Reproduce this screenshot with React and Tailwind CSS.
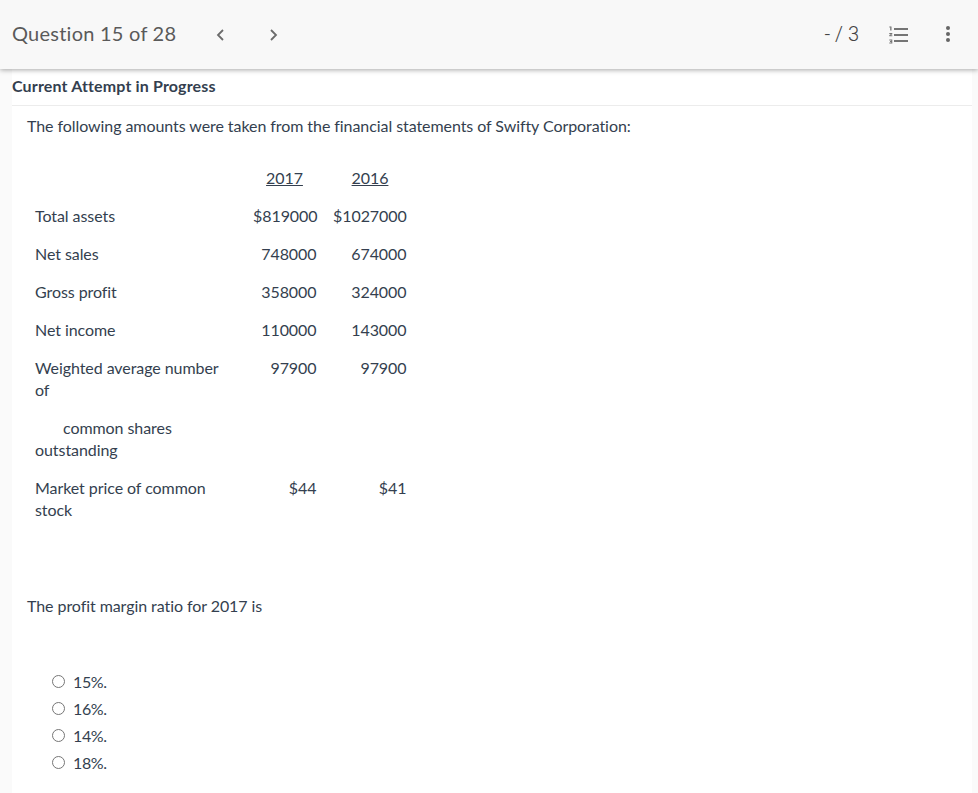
const rows = [
  [<>Total assets</>, "$819000", "$1027000"],
  [<>Net sales</>, "748000", "674000"],
  [<>Gross profit</>, "358000", "324000"],
  [<>Net income</>, "110000", "143000"],
  [<>Weighted average number of</>, "97900", "97900"],
  [<><span className="pl-7">common shares</span> outstanding</>, "", ""],
  [<>Market price of common stock</>, "$44", "$41"],
];

function Radio({ label }) {
  return (
    <div className="flex h-[27px] items-center">
      <span className="ml-[40px] h-[13px] w-[13px] rounded-full border border-[#767676] bg-white" />
      <span className="ml-[8px] tracking-[-0.4px]">{label}</span>
    </div>
  );
}

function ListIcon() {
  return (
    <svg width="20" height="18" viewBox="0 0 20 18" className="block text-[#757575]" fill="currentColor">
      <rect x="5" y="2" width="14" height="2" />
      <rect x="5" y="8" width="14" height="2" />
      <rect x="5" y="14" width="14" height="2" />
      <rect x="1.2" y="0.5" width="1.300" height="4" />
      <rect x="0.3" y="0.5" width="1.200" height="1" />
      <path d="M0.3 7h3v1.300l-1.800 1h1.800v.9h-3v-1.300l1.800-1h-1.800z" />
      <path d="M0.3 13.500h3v4h-3v-.9h2v-.7h-1.300v-.8h1.300v-.7h-2z" />
    </svg>
  );
}

export default function App() {
  return (
    <div className="h-[793px] overflow-hidden bg-[#fafafa] font-['Lato',sans-serif] text-base leading-[22px] tracking-[-0.07px] text-[#343f4f]">
      <header className="relative z-10 flex h-[69px] items-center bg-[#f8f8f8] pl-3 pr-[28px] tracking-normal shadow-[0_1px_5px_rgba(0,0,0,0.35)]">
        <span className="mb-1 text-xl tracking-[0.24px] text-[#5a5a5a]">Question 15 of 28</span>
        <svg width="8" height="14" viewBox="0 0 8 14" className="ml-[40px] text-[#6b6b6b]" fill="none" stroke="currentColor" strokeWidth="1.800">
          <path d="M7 2 2 7l5 5" />
        </svg>
        <svg width="8" height="14" viewBox="0 0 8 14" className="ml-[46px] text-[#6b6b6b]" fill="none" stroke="currentColor" strokeWidth="1.800">
          <path d="M1 2l5 5-5 5" />
        </svg>
        <span className="mb-[2px] ml-auto font-['Roboto',sans-serif] text-xl font-light text-[#444]">- / 3</span>
        <span className="ml-[30px]"><ListIcon /></span>
        <span className="mb-[1px] ml-[37px] flex flex-col gap-[2px]">
          <i className="block h-1 w-1 rounded-full bg-[#666]" />
          <i className="block h-1 w-1 rounded-full bg-[#666]" />
          <i className="block h-1 w-1 rounded-full bg-[#666]" />
        </span>
      </header>
      <main className="mx-[12px] mr-[6px] h-full bg-white">
        <div className="flex h-[37px] items-center border-b border-[#ececec] pb-[3px] font-bold tracking-[0.15px]">Current Attempt in Progress</div>
        <div className="pl-[15px]">
          <p className="mt-[9px]">The following amounts were taken from the financial statements of Swifty Corporation:</p>
          <table className="mt-[22px] w-[388px] table-fixed border-collapse">
            <colgroup>
              <col className="w-[218px]" />
              <col className="w-[80px]" />
              <col className="w-[90px]" />
            </colgroup>
            <thead>
              <tr>
                <th className="p-2 font-normal"></th>
                <th className="p-2 pr-[9px] text-center font-normal underline">2017</th>
                <th className="p-2 text-center font-normal underline">2016</th>
              </tr>
            </thead>
            <tbody>
              {rows.map((r, i) => (
                <tr key={i}>
                  <td className="p-2 pr-[14px] align-top">{r[0]}</td>
                  <td className="p-2 pr-[8.500px] text-right align-top">{r[1]}</td>
                  <td className="p-2 pr-[8.500px] text-right align-top">{r[2]}</td>
                </tr>
              ))}
            </tbody>
          </table>
          <p className="mt-[66px]">The profit margin ratio for 2017 is</p>
        </div>
        <div className="mt-[51px]">
          {["15%.", "16%.", "14%.", "18%."].map((l) => <Radio key={l} label={l} />)}
        </div>
      </main>
    </div>
  );
}
